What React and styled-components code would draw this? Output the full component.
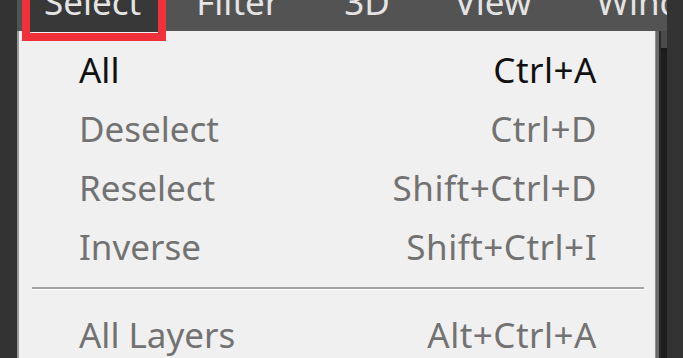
import React from 'react';
import styled, { createGlobalStyle } from 'styled-components';

const GlobalStyle = createGlobalStyle`
  html, body {
    margin: 0;
    padding: 0;
    background: #333333;
  }
  body {
    font-family: "Noto Sans", "Open Sans", sans-serif;
  }
`;

const Screen = styled.div`
  width: 683px;
  height: 358px;
  overflow: hidden;
  display: flex;
  background: #333333;
`;

const SideStrip = styled.div`
  flex: 0 0 ${props => props.width}px;
  background: #333333;
`;

const Main = styled.div`
  position: relative;
  flex: 0 0 650px;
  display: flex;
  flex-direction: column;
  overflow: hidden;
`;

const MenuBar = styled.div`
  height: 31px;
  flex: 0 0 31px;
  display: flex;
  gap: 11px;
  padding-left: 13px;
  background: #535353;
  box-sizing: border-box;
`;

const BarItem = styled.div`
  position: relative;
  height: ${props => (props.active ? 32 : 31)}px;
  padding: ${props => (props.active ? '0 17px 0 14px' : '0 27px')};
  background: ${props => (props.active ? '#383838' : 'transparent')};
  color: #e4e4e4;
  font-size: 35px;
  line-height: 4px;
  white-space: nowrap;
  z-index: ${props => (props.active ? 3 : 1)};

  &::after {
    content: '';
    display: ${props => (props.active ? 'block' : 'none')};
    position: absolute;
    top: -10px;
    left: -8px;
    right: -8px;
    bottom: -9px;
    border: 8px solid #f0303a;
  }
`;

const Workspace = styled.div`
  flex: 1;
  display: flex;
  flex-direction: column;
  background: #1d1d1d;
`;

const OptionsBand = styled.div`
  height: 17px;
  background: #4b4b4b;
  border-bottom: 3px solid #1a1a1a;
`;

const Dropdown = styled.div`
  position: absolute;
  top: 31px;
  left: 0;
  width: 639px;
  height: 340px;
  box-sizing: border-box;
  padding: 9px 58px 0 60px;
  background: #f0f0f0;
  border-left: 2px solid #9a9a9a;
  border-right: 1px solid #8d8d8d;
  box-shadow: 3px 0 0 #6a6a6a, 5px 0 0 #2a2a2a;
  z-index: 2;
`;

const Row = styled.div`
  display: flex;
  justify-content: space-between;
  height: 59px;
  line-height: 59px;
  font-size: 35px;
  color: ${props => (props.enabled ? '#111111' : '#727272')};
  white-space: nowrap;
`;

const Shortcut = styled.span`
  letter-spacing: 0.5px;
`;

const Separator = styled.div`
  margin: 11px -47px 15px -47px;
  border-top: 2px solid #a3a3a3;
  border-bottom: 1px solid #ffffff;
`;

const items = [
  { label: 'All', key: 'Ctrl+A', enabled: true },
  { label: 'Deselect', key: 'Ctrl+D' },
  { label: 'Reselect', key: 'Shift+Ctrl+D' },
  { label: 'Inverse', key: 'Shift+Ctrl+I' }
];

const menus = ['Select', 'Filter', '3D', 'View', 'Window'];

export default function App() {
  return (
    <React.Fragment>
      <GlobalStyle />
      <Screen>
        <SideStrip width={17} />
        <Main>
          <MenuBar>
            {menus.map((m, i) => (
              <BarItem key={m} active={i === 0}>
                {m}
              </BarItem>
            ))}
          </MenuBar>
          <Workspace>
            <OptionsBand />
          </Workspace>
          <Dropdown>
            {items.map(item => (
              <Row key={item.label} enabled={item.enabled}>
                <span>{item.label}</span>
                <Shortcut>{item.key}</Shortcut>
              </Row>
            ))}
            <Separator />
            <Row>
              <span>All Layers</span>
              <Shortcut>Alt+Ctrl+A</Shortcut>
            </Row>
          </Dropdown>
        </Main>
        <SideStrip width={16} />
      </Screen>
    </React.Fragment>
  );
}
